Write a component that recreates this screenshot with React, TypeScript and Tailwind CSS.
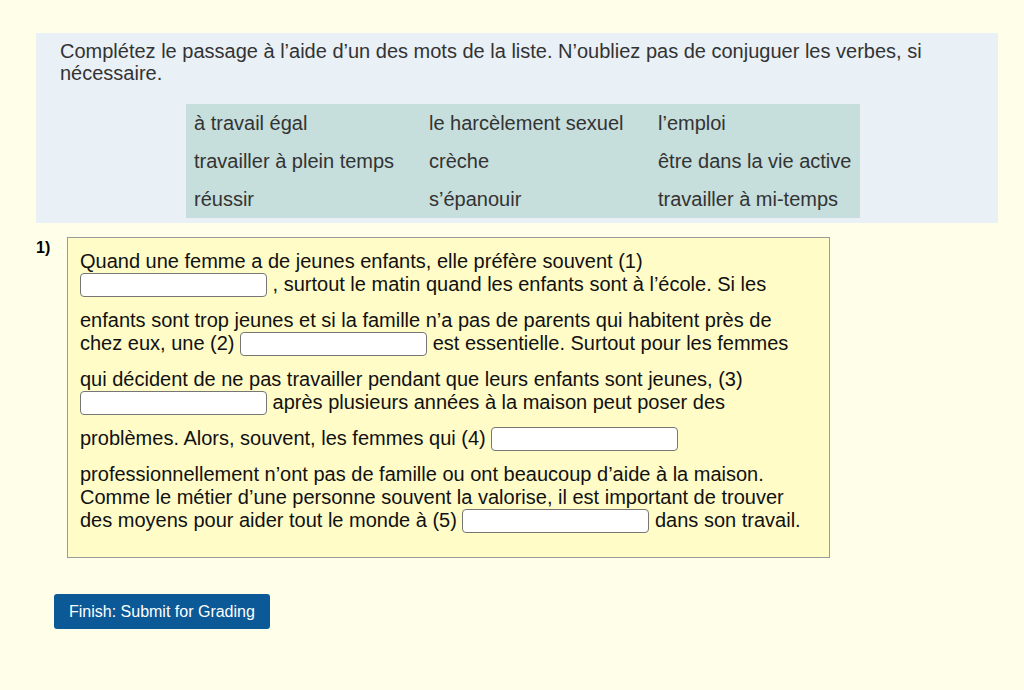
import React from 'react';

const words: string[][] = [
  ['à travail égal', 'le harcèlement sexuel', 'l’emploi'],
  ['travailler à plein temps', 'crèche', 'être dans la vie active'],
  ['réussir', 's’épanouir', 'travailler à mi-temps'],
];

function Blank() {
  return (
    <input
      type="text"
      className="inline-block align-top w-[187px] h-[24px] mb-[12px] border border-[#767676] rounded-[4px] bg-white px-1 text-[13px] outline-none"
    />
  );
}

export default function App() {
  return (
    <div className="min-h-[690px] bg-[#fffee8] pt-[33px] font-['Liberation_Sans',Arial,sans-serif]">
      {/* Instructions + word bank */}
      <div className="ml-[36px] w-[962px] bg-[#e9f0f6] pt-[7px] pb-[5px] pl-6 pr-6">
        <p className="text-[20px] leading-[22px] text-[#333]">
          Complétez le passage à l’aide d’un des mots de la liste. N’oubliez pas de conjuguer les verbes, si nécessaire.
        </p>
        <div className="mt-[20px] ml-[126px] w-[674px] bg-[#c6dedc] grid grid-cols-[235px_229px_210px]">
          {words.flat().map((w, i) => (
            <div key={i} className="h-[38px] flex items-center pl-2 text-[20px] text-[#333]">
              {w}
            </div>
          ))}
        </div>
      </div>

      {/* Question */}
      <div className="flex ml-[36px] mt-[14px]">
        <div className="w-[31px] -mt-[1px] text-[16px] font-bold text-black">1)</div>
        <div className="w-[763px] border border-[#9a9a9a] bg-[#fffcc8] p-3 text-[20px] leading-[23px] text-[#111]">
          Quand une femme a de jeunes enfants, elle préfère souvent (1) <Blank /> , surtout le matin quand les
          enfants sont à l’école. Si les enfants sont trop jeunes et si la famille n’a pas de parents qui habitent
          près de chez eux, une (2) <Blank /> est essentielle. Surtout pour les femmes qui décident de ne pas
          travailler pendant que leurs enfants sont jeunes, (3) <Blank /> après plusieurs années à la maison peut
          poser des problèmes. Alors, souvent, les femmes qui (4) <Blank /> professionnellement n’ont pas de famille
          ou ont beaucoup d’aide à la maison. Comme le métier d’une personne souvent la valorise, il est important
          de trouver des moyens pour aider tout le monde à (5) <Blank /> dans son travail.
        </div>
      </div>

      <button className="ml-[54px] mt-[36px] h-[35px] px-[15px] rounded-[3px] bg-[#0b5996] text-white text-[16px]">
        Finish: Submit for Grading
      </button>
    </div>
  );
}
